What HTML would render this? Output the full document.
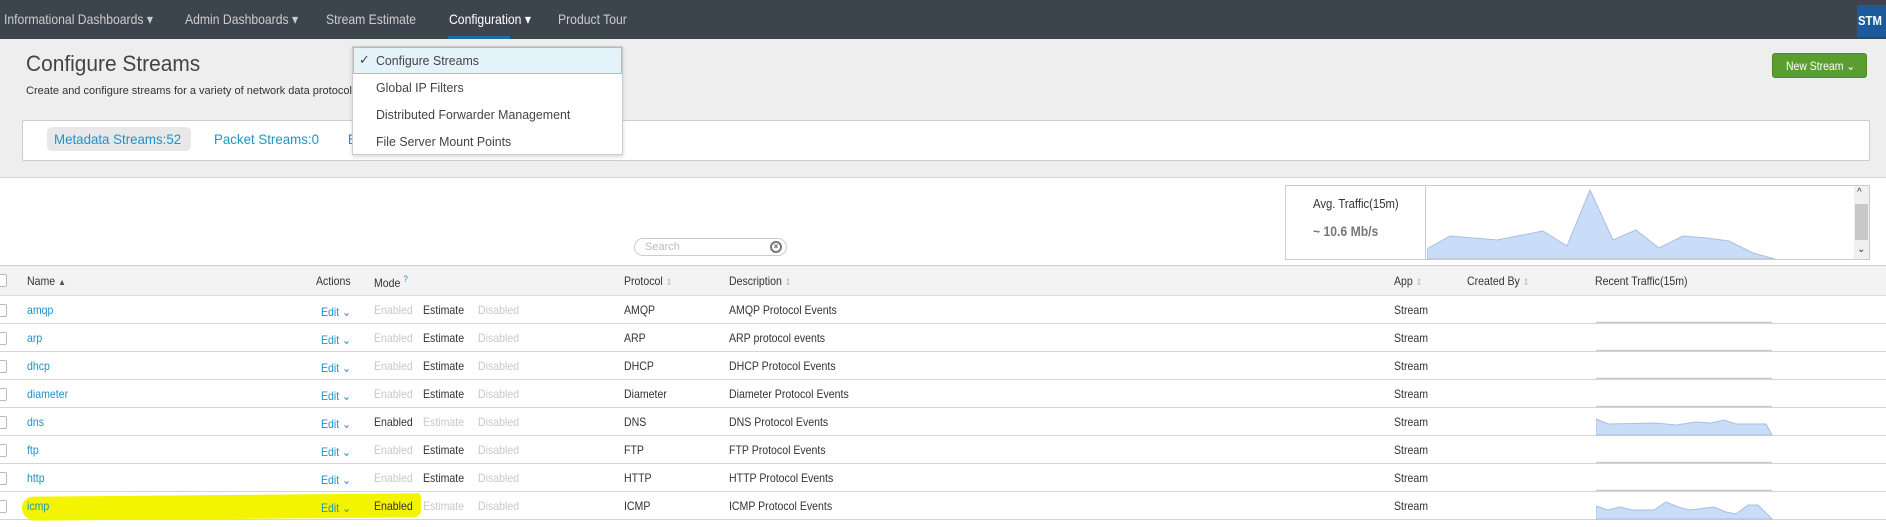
<!DOCTYPE html>
<html><head><meta charset="utf-8"><style>
*{box-sizing:border-box;margin:0;padding:0}
body{width:1886px;height:527px;overflow:hidden;background:#fff;font-family:"Liberation Sans Narrow","Liberation Sans",sans-serif;color:#333;position:relative}
.a{position:absolute;white-space:nowrap}
.s{transform:scaleX(.87);transform-origin:0 0}
.s2{transform:scaleX(.95);transform-origin:0 0}
.nav{position:absolute;left:0;top:0;width:1886px;height:39px;background:#3c444d}
.nav span{position:absolute;top:11px;font-size:14px;color:#ccc;transform:scaleX(.87);transform-origin:0 0;white-space:nowrap}
.top{position:absolute;left:0;top:39px;width:1886px;height:139px;background:#eee;border-bottom:1px solid #d5d5d5}
.link{color:#1e93c6}
.row{position:absolute;left:0;width:1886px;height:28px;border-bottom:1px solid #d5d5d5;font-size:12px}
.row span{position:absolute;top:7px;transform:scaleX(.88);transform-origin:0 0;white-space:nowrap}
.cb{position:absolute;left:-6px;top:8px;width:13px;height:13px;border:1px solid #bbb;border-radius:2px;background:#fff}
.dim{color:#c8c8c8}
.hd{position:absolute;left:0;top:265px;width:1886px;height:31px;background:#f3f3f3;border-top:1px solid #ccc;border-bottom:1px solid #ddd;font-size:12px}
.hd>span{position:absolute;top:8px;transform:scaleX(.88);transform-origin:0 0;white-space:nowrap}
.srt{color:#bbb;font-size:9px}
</style></head><body>
<div class="nav">
<span style="left:4px">Informational Dashboards ▾</span>
<span style="left:185px">Admin Dashboards ▾</span>
<span style="left:326px">Stream Estimate</span>
<span style="left:449px;color:#fff">Configuration ▾</span>
<div class="a" style="left:448px;top:36px;width:62px;height:3px;background:#1a6fa8"></div>
<span style="left:558px">Product Tour</span>
<div class="a" style="left:1857px;top:5px;width:29px;height:32px;background:#1c5a9c;color:#fff;font:bold 13px 'Liberation Sans',sans-serif;padding:8px 0 0 1px"><div class="s">STM</div></div>
</div>
<div class="top">
<div class="a s2" style="left:26px;top:12px;font-size:22px;color:#444">Configure Streams</div>
<div class="a" style="left:26px;top:46px;font-size:11px;color:#333">Create and configure streams for a variety of network data protocols</div>
<div class="a" style="left:1772px;top:14px;width:95px;height:25px;background:#5a9e2f;border:1px solid #4a8a25;border-radius:3px;color:#fff;font-size:12px;padding:5px 0 0 13px"><div class="s">New Stream ⌄</div></div>
<div class="a" style="left:22px;top:81px;width:1848px;height:41px;background:#fff;border:1px solid #ccc;border-radius:2px"></div>
<div class="a link" style="left:47px;top:88px;width:144px;height:24px;background:#e8e8e8;border-radius:5px;font-size:14px;padding:4px 0 0 7px"><div class="s2">Metadata Streams:52</div></div>
<div class="a link s2" style="left:214px;top:92px;font-size:14px">Packet Streams:0</div>
<div class="a link s" style="left:348px;top:92px;font-size:14px">E</div>
</div>
<div class="a" style="left:352px;top:46px;width:271px;height:109px;background:#fff;border:1px solid #ccc;box-shadow:0 2px 4px rgba(0,0,0,.15);font-size:13px;color:#444">
<div style="position:absolute;left:0;top:0;width:269px;height:27px;background:#e4f2fa;border:1px solid #8cc7e8"></div>
<div class="a" style="left:6px;top:5px">✓</div>
<div class="a s2" style="left:23px;top:6px">Configure Streams</div>
<div class="a s2" style="left:23px;top:33px">Global IP Filters</div>
<div class="a s2" style="left:23px;top:60px">Distributed Forwarder Management</div>
<div class="a s2" style="left:23px;top:87px">File Server Mount Points</div>
</div>
<div class="a" style="left:1285px;top:185px;width:585px;height:75px;border:1px solid #ccc;background:#fff">
<div class="a" style="left:139px;top:0;width:1px;height:73px;background:#ccc"></div>
<div class="a s" style="left:27px;top:10px;font-size:13px">Avg. Traffic(15m)</div>
<div class="a s" style="left:27px;top:37px;font-size:14px;font-weight:bold;color:#777">~ 10.6 Mb/s</div>
<svg class="a" style="left:141px;top:0" width="428" height="73" viewBox="0 0 428 73"><path d="M0,63 L23,50 L70,54 L116,45 L140,60 L163,4 L186,54 L209,44 L232,62 L256,50 L280,52 L302,55 L326,67 L348,73 L0,73Z" fill="#c9dcf8" stroke="#a9bfe0" stroke-width="1"/></svg>
<div class="a" style="left:568px;top:0;width:15px;height:73px;background:#f0f0f0"><div style="position:absolute;left:1px;top:18px;width:13px;height:36px;background:#c8c8c8"></div><div class="a" style="left:3px;top:1px;font-size:10px">^</div><div class="a" style="left:3px;top:58px;font-size:10px">⌄</div></div>
</div>
<div class="a" style="left:634px;top:238px;width:153px;height:18px;border:1px solid #ccc;border-radius:9px;font-size:11px;color:#bbb;padding:2px 0 0 10px">Search<span style="position:absolute;right:4px;top:2px;width:12px;height:12px;border-radius:6px;border:2px solid #777;font-size:8px;line-height:8px;text-align:center;color:#555;font-weight:bold">×</span></div>
<div class="hd">
<div class="cb" style="top:8px"></div>
<span style="left:27px">Name <span style="color:#555;font-size:9px">▲</span></span>
<span style="left:316px">Actions</span>
<span style="left:374px">Mode <sup class="link" style="font-size:9px">?</sup></span>
<span style="left:624px">Protocol <span class="srt">⇕</span></span>
<span style="left:729px">Description <span class="srt">⇕</span></span>
<span style="left:1394px">App <span class="srt">⇕</span></span>
<span style="left:1467px">Created By <span class="srt">⇕</span></span>
<span style="left:1595px">Recent Traffic(15m)</span>
</div>
<div class="a" style="left:22px;top:495px;width:399px;height:24px;background:#f4f400;border-radius:12px 4px 8px 14px;transform:rotate(-.5deg)"></div>
<div id="rows"></div>
<script>
var d=[["amqp","AMQP","AMQP Protocol Events",0],["arp","ARP","ARP protocol events",0],["dhcp","DHCP","DHCP Protocol Events",0],["diameter","Diameter","Diameter Protocol Events",0],["dns","DNS","DNS Protocol Events",1],["ftp","FTP","FTP Protocol Events",0],["http","HTTP","HTTP Protocol Events",0],["icmp","ICMP","ICMP Protocol Events",1]];
var h="";
d.forEach(function(r,i){var t=296+i*28;var en=r[3];
var sp=i==4?'<path d="M0,10 L12,15 L60,14 L80,16 L100,13 L115,14 L128,11 L140,15 L170,15 L176,26 L0,26Z" fill="#c9dcf8" stroke="#a9bfe0"/>':i==7?'<path d="M0,13 L12,17 L24,14 L36,17 L58,17 L70,9 L82,14 L94,17 L118,14 L130,19 L140,21 L152,12 L162,12 L176,26 L0,26Z" fill="#c9dcf8" stroke="#a9bfe0"/>':'<line x1="0" y1="25.5" x2="176" y2="25.5" stroke="#c4cbd6" stroke-width="1.5"/>';
h+='<div class="row" style="top:'+t+'px"><div class="cb"></div><span class="link" style="left:27px">'+r[0]+'</span><span class="link" style="left:321px;top:9px">Edit ⌄</span><span style="left:374px" class="'+(en?'':'dim')+'">Enabled</span><span style="left:423px" class="'+(en?'dim':'')+'">Estimate</span><span class="dim" style="left:478px">Disabled</span><span style="left:624px">'+r[1]+'</span><span style="left:729px">'+r[2]+'</span><span style="left:1394px">Stream</span><svg style="position:absolute;left:1596px;top:1px" width="178" height="27">'+sp+'</svg></div>';});
document.getElementById("rows").innerHTML=h;
</script>
</body></html>
